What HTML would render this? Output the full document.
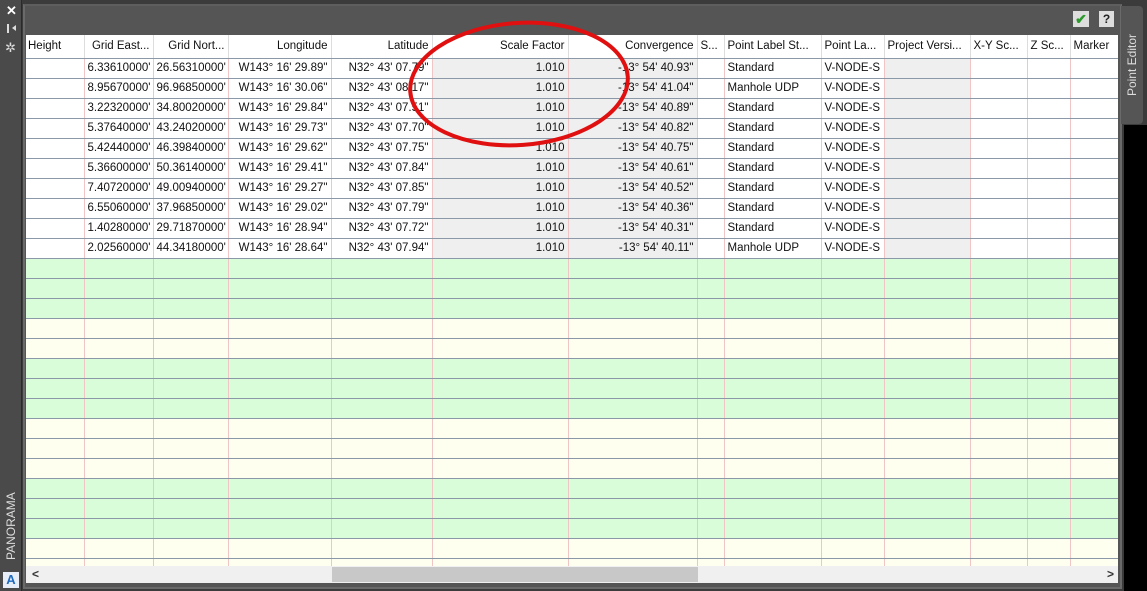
<!DOCTYPE html>
<html><head><meta charset="utf-8"><style>
*{margin:0;padding:0;box-sizing:border-box}
body{width:1147px;height:591px;background:#3b3b3b;position:relative;overflow:hidden;font-family:"Liberation Sans",sans-serif;font-size:12px;color:#111}
.side{position:absolute;left:0;top:0;width:22px;height:591px;background:#4a4a4a;border-right:1px solid #2a2a2a}
.panel{position:absolute;left:23px;top:4px;width:1099px;height:585px;background:#555;border:2px solid #6a6a6a;border-top-color:#5e5e5e}
.grid{position:absolute;left:26px;top:35px;width:1092px;height:531px;overflow:hidden;background:#fff}
table{border-collapse:collapse;table-layout:fixed;width:1092px}
td,th{height:20px;border-bottom:1px solid #8a98a8;border-right:1px solid #efc5c5;padding:0 3px;white-space:nowrap;overflow:hidden;font-weight:normal;font-size:11.5px}
th{height:23px;border-right:1px solid #ddd;text-align:right;background:#fff}
.r{text-align:right}.l{text-align:left}
.g td.s{background:#efefef}
tr.gr td{background:#d8fdd8}
tr.ye td{background:#fffff0}
.sb{position:absolute;left:26px;top:566px;width:1092px;height:17px;background:#f0f0f0}
.tab{position:absolute;left:1121px;top:6px;width:22px;height:118px;background:#555;border-radius:0 4px 4px 0}
</style></head><body>
<div class="side">
<div style="position:absolute;left:6px;top:3px;color:#fff;font-weight:bold;font-size:13px">✕</div>
<div style="position:absolute;left:7px;top:24px;width:10px;height:9px;border-left:2px solid #ddd"><div style="position:absolute;left:3px;top:1px;border:3.5px solid transparent;border-right:4px solid #ddd;border-left:0"></div></div>
<div style="position:absolute;left:5px;top:40px;color:#ddd;font-size:13px">✲</div>
<div style="position:absolute;left:-22px;top:520px;transform:rotate(-90deg);transform-origin:center;width:66px;color:#ddd;font-size:12px">PANORAMA</div>
<div style="position:absolute;left:3px;top:572px;width:16px;height:16px;background:#e8eef8;color:#1e6bbf;font-weight:bold;font-size:13px;text-align:center;line-height:16px">A</div>
</div>
<div class="panel"></div>
<div style="position:absolute;left:1073px;top:11px;width:16px;height:16px;background:#ddd;color:#2a9a2a;font-size:14px;line-height:16px;text-align:center;font-weight:bold">✔</div>
<div style="position:absolute;left:1099px;top:11px;width:15px;height:16px;background:#ddd;color:#222;font-weight:bold;font-size:12px;line-height:16px;text-align:center">?</div>
<div class="tab"><div style="position:absolute;left:-26px;top:52px;width:74px;transform:rotate(-90deg);color:#ddd;font-size:12px;text-align:center">Point Editor</div></div>
<div class="grid"><table>
<colgroup><col style="width:58px"><col style="width:69px"><col style="width:75px"><col style="width:103px"><col style="width:101px"><col style="width:136px"><col style="width:129px"><col style="width:27px"><col style="width:97px"><col style="width:63px"><col style="width:86px"><col style="width:57px"><col style="width:43px"><col style="width:48px"></colgroup>
<tr><th class="l" style="padding-left:2px">Height</th><th>Grid East...</th><th>Grid Nort...</th><th>Longitude</th><th>Latitude</th><th>Scale Factor</th><th>Convergence</th><th class="l">S...</th><th class="l">Point Label St...</th><th class="l">Point La...</th><th class="l">Project Versi...</th><th class="l">X-Y Sc...</th><th class="l">Z Sc...</th><th class="l">Marker</th></tr>
<tr class="g"><td></td><td class="r">6.33610000'</td><td class="r">26.56310000'</td><td class="r">W143° 16' 29.89"</td><td class="r">N32° 43' 07.79"</td><td class="r s">1.010</td><td class="r s">-13° 54' 40.93"</td><td></td><td>Standard</td><td>V-NODE-S</td><td class="s"></td><td></td><td></td><td></td></tr>
<tr class="g"><td></td><td class="r">8.95670000'</td><td class="r">96.96850000'</td><td class="r">W143° 16' 30.06"</td><td class="r">N32° 43' 08.17"</td><td class="r s">1.010</td><td class="r s">-13° 54' 41.04"</td><td></td><td>Manhole UDP</td><td>V-NODE-S</td><td class="s"></td><td></td><td></td><td></td></tr>
<tr class="g"><td></td><td class="r">3.22320000'</td><td class="r">34.80020000'</td><td class="r">W143° 16' 29.84"</td><td class="r">N32° 43' 07.51"</td><td class="r s">1.010</td><td class="r s">-13° 54' 40.89"</td><td></td><td>Standard</td><td>V-NODE-S</td><td class="s"></td><td></td><td></td><td></td></tr>
<tr class="g"><td></td><td class="r">5.37640000'</td><td class="r">43.24020000'</td><td class="r">W143° 16' 29.73"</td><td class="r">N32° 43' 07.70"</td><td class="r s">1.010</td><td class="r s">-13° 54' 40.82"</td><td></td><td>Standard</td><td>V-NODE-S</td><td class="s"></td><td></td><td></td><td></td></tr>
<tr class="g"><td></td><td class="r">5.42440000'</td><td class="r">46.39840000'</td><td class="r">W143° 16' 29.62"</td><td class="r">N32° 43' 07.75"</td><td class="r s">1.010</td><td class="r s">-13° 54' 40.75"</td><td></td><td>Standard</td><td>V-NODE-S</td><td class="s"></td><td></td><td></td><td></td></tr>
<tr class="g"><td></td><td class="r">5.36600000'</td><td class="r">50.36140000'</td><td class="r">W143° 16' 29.41"</td><td class="r">N32° 43' 07.84"</td><td class="r s">1.010</td><td class="r s">-13° 54' 40.61"</td><td></td><td>Standard</td><td>V-NODE-S</td><td class="s"></td><td></td><td></td><td></td></tr>
<tr class="g"><td></td><td class="r">7.40720000'</td><td class="r">49.00940000'</td><td class="r">W143° 16' 29.27"</td><td class="r">N32° 43' 07.85"</td><td class="r s">1.010</td><td class="r s">-13° 54' 40.52"</td><td></td><td>Standard</td><td>V-NODE-S</td><td class="s"></td><td></td><td></td><td></td></tr>
<tr class="g"><td></td><td class="r">6.55060000'</td><td class="r">37.96850000'</td><td class="r">W143° 16' 29.02"</td><td class="r">N32° 43' 07.79"</td><td class="r s">1.010</td><td class="r s">-13° 54' 40.36"</td><td></td><td>Standard</td><td>V-NODE-S</td><td class="s"></td><td></td><td></td><td></td></tr>
<tr class="g"><td></td><td class="r">1.40280000'</td><td class="r">29.71870000'</td><td class="r">W143° 16' 28.94"</td><td class="r">N32° 43' 07.72"</td><td class="r s">1.010</td><td class="r s">-13° 54' 40.31"</td><td></td><td>Standard</td><td>V-NODE-S</td><td class="s"></td><td></td><td></td><td></td></tr>
<tr class="g"><td></td><td class="r">2.02560000'</td><td class="r">44.34180000'</td><td class="r">W143° 16' 28.64"</td><td class="r">N32° 43' 07.94"</td><td class="r s">1.010</td><td class="r s">-13° 54' 40.11"</td><td></td><td>Manhole UDP</td><td>V-NODE-S</td><td class="s"></td><td></td><td></td><td></td></tr>
<tr class="gr"><td></td><td></td><td></td><td></td><td></td><td></td><td></td><td></td><td></td><td></td><td></td><td></td><td></td><td></td></tr>
<tr class="gr"><td></td><td></td><td></td><td></td><td></td><td></td><td></td><td></td><td></td><td></td><td></td><td></td><td></td><td></td></tr>
<tr class="gr"><td></td><td></td><td></td><td></td><td></td><td></td><td></td><td></td><td></td><td></td><td></td><td></td><td></td><td></td></tr>
<tr class="ye"><td></td><td></td><td></td><td></td><td></td><td></td><td></td><td></td><td></td><td></td><td></td><td></td><td></td><td></td></tr>
<tr class="ye"><td></td><td></td><td></td><td></td><td></td><td></td><td></td><td></td><td></td><td></td><td></td><td></td><td></td><td></td></tr>
<tr class="gr"><td></td><td></td><td></td><td></td><td></td><td></td><td></td><td></td><td></td><td></td><td></td><td></td><td></td><td></td></tr>
<tr class="gr"><td></td><td></td><td></td><td></td><td></td><td></td><td></td><td></td><td></td><td></td><td></td><td></td><td></td><td></td></tr>
<tr class="gr"><td></td><td></td><td></td><td></td><td></td><td></td><td></td><td></td><td></td><td></td><td></td><td></td><td></td><td></td></tr>
<tr class="ye"><td></td><td></td><td></td><td></td><td></td><td></td><td></td><td></td><td></td><td></td><td></td><td></td><td></td><td></td></tr>
<tr class="ye"><td></td><td></td><td></td><td></td><td></td><td></td><td></td><td></td><td></td><td></td><td></td><td></td><td></td><td></td></tr>
<tr class="ye"><td></td><td></td><td></td><td></td><td></td><td></td><td></td><td></td><td></td><td></td><td></td><td></td><td></td><td></td></tr>
<tr class="gr"><td></td><td></td><td></td><td></td><td></td><td></td><td></td><td></td><td></td><td></td><td></td><td></td><td></td><td></td></tr>
<tr class="gr"><td></td><td></td><td></td><td></td><td></td><td></td><td></td><td></td><td></td><td></td><td></td><td></td><td></td><td></td></tr>
<tr class="gr"><td></td><td></td><td></td><td></td><td></td><td></td><td></td><td></td><td></td><td></td><td></td><td></td><td></td><td></td></tr>
<tr class="ye"><td></td><td></td><td></td><td></td><td></td><td></td><td></td><td></td><td></td><td></td><td></td><td></td><td></td><td></td></tr>
<tr class="ye"><td></td><td></td><td></td><td></td><td></td><td></td><td></td><td></td><td></td><td></td><td></td><td></td><td></td><td></td></tr>
</table></div>
<div class="sb">
<div style="position:absolute;left:6px;top:1px;color:#333;font-weight:bold;font-size:12px">&lt;</div>
<div style="position:absolute;left:306px;top:1px;width:366px;height:15px;background:#c8c8c8"></div>
<div style="position:absolute;right:4px;top:1px;color:#333;font-weight:bold;font-size:12px">&gt;</div>
</div>
<div style="position:absolute;left:1124px;top:125px;width:23px;height:466px;background:#000"></div>
<svg style="position:absolute;left:0;top:0" width="1147" height="591"><ellipse cx="519" cy="84" rx="109" ry="61" transform="rotate(-4 519 84)" fill="none" stroke="#e01010" stroke-width="4"/></svg>
</body></html>
